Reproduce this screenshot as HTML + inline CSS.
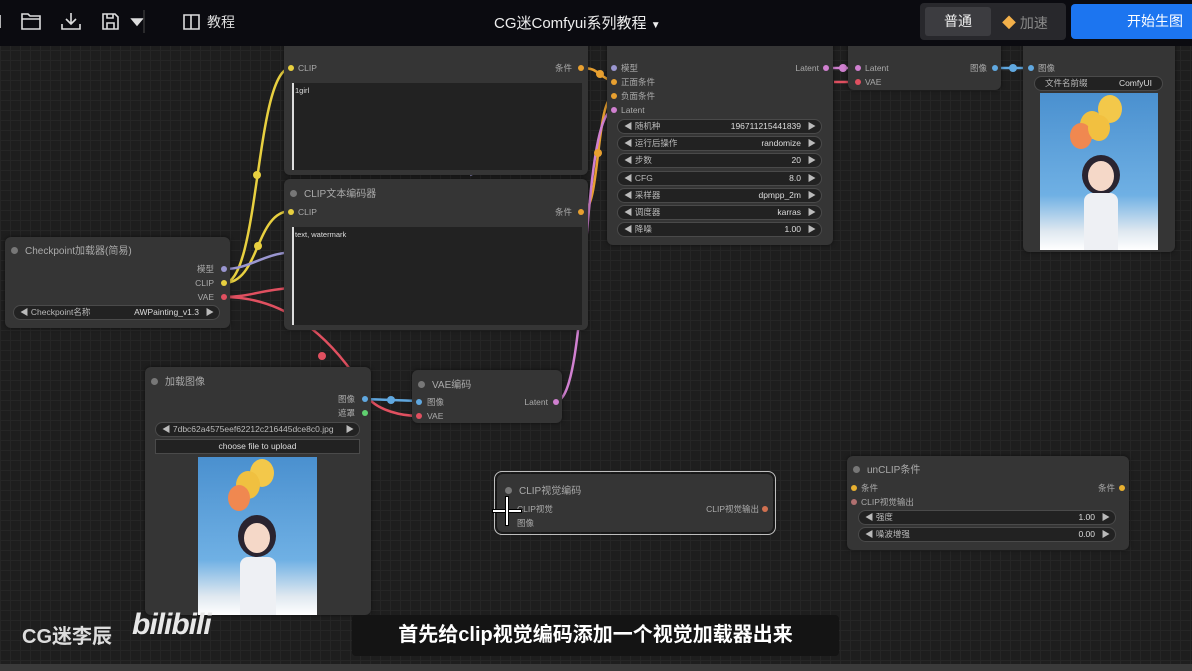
<!DOCTYPE html>
<html><head><meta charset="utf-8"><style>
*{margin:0;padding:0;box-sizing:border-box}
body{width:1192px;height:671px;overflow:hidden;background:#1e1e1e;font-family:"Liberation Sans","Noto Sans CJK SC",sans-serif;color:#bbb;position:relative;
background-image:linear-gradient(#262626 1px,transparent 1px),linear-gradient(90deg,#262626 1px,transparent 1px),linear-gradient(#181818 1px,transparent 1px),linear-gradient(90deg,#181818 1px,transparent 1px);
background-size:10px 10px,10px 10px,100px 100px,100px 100px}
.a{position:absolute}
.node{position:absolute;background:#353535;border-radius:6px;box-shadow:0 0 4px #0008}
.tt{position:absolute;font-size:10px;color:#aaa;white-space:nowrap}
.tt::before{content:"";display:inline-block;width:7px;height:7px;border-radius:50%;background:#777;margin-right:7px;vertical-align:-0px}
.lb{position:absolute;font-size:8.5px;color:#aaa;white-space:nowrap;line-height:10px}
.dot{position:absolute;width:6px;height:6px;border-radius:50%}
.w{position:absolute;height:15px;border-radius:8px;background:#222;border:1px solid #4a4a4a;font-size:8.5px;color:#bbb;line-height:13px}
.w .l{position:absolute;left:6px}.w .r{position:absolute;right:20px;color:#ddd}.w .ar{position:absolute;right:5px}
.ta{position:absolute;background:#222;border-left:2px solid #ddd;font-size:7.5px;color:#ddd;padding:3px 1px}
.img{position:absolute;background:linear-gradient(#4a90cf,#6fb0e4 65%,#dfe8f0 88%,#fff);overflow:hidden}
.bal{position:absolute;border-radius:50%}
</style></head><body>
<svg class="a" style="left:0;top:0" width="1192" height="671">
<g fill="none" stroke-width="2.5">
<path d="M224 283 C260 283,255 68,291 68" stroke="#e8d040"/>
<path d="M224 283 C260 283,255 211,291 211" stroke="#e8d040"/>
<path d="M224 269 C250 269,260 255,291 252" stroke="#9a96d0"/>
<path d="M224 297 C250 297,260 290,291 288" stroke="#e05060"/>
<path d="M224 297 C280 297,330 330,370 400 C380 410,400 416,419 416" stroke="#e05060"/>
<path d="M581 68 C600 68,595 75,614 82" stroke="#e8a030"/>
<path d="M583 211 C600 211,596 96,614 96" stroke="#e8a030"/>
<path d="M556 401 C590 401,580 110,614 110" stroke="#d080d0"/>
<path d="M826 68 L858 68" stroke="#d080d0"/>
<path d="M834 82 L858 82" stroke="#e05060"/>
<path d="M996 68 L1030 68" stroke="#60a8e0"/>
<path d="M364 399 L419 401" stroke="#60a8e0"/>
<path d="M470 175 L480 170" stroke="#9a96d0"/>
</g>
<circle cx="257" cy="175" r="4" fill="#e8d040"/><circle cx="258" cy="246" r="4" fill="#e8d040"/>
<circle cx="322" cy="356" r="4" fill="#e05060"/><circle cx="598" cy="153" r="4" fill="#e8a030"/>
<circle cx="843" cy="68" r="4" fill="#d080d0"/><circle cx="1013" cy="68" r="4" fill="#60a8e0"/>
<circle cx="391" cy="400" r="4" fill="#60a8e0"/><circle cx="600" cy="74" r="4" fill="#e8a030"/>
</svg>

<div class="node" style="left:284px;top:38px;width:304px;height:137px">
<div class="lb" style="left:14px;top:25px">CLIP</div><div class="dot" style="left:4px;top:27px;background:#e8d040"></div>
<div class="lb" style="right:16px;top:25px">条件</div><div class="dot" style="right:4px;top:27px;background:#e8a030"></div>
<div class="ta" style="left:8px;top:45px;width:290px;height:87px">1girl</div></div>
<div class="node" style="left:284px;top:179px;width:304px;height:151px">
<div class="tt" style="left:6px;top:6px">CLIP文本编码器</div>
<div class="lb" style="left:14px;top:28px">CLIP</div><div class="dot" style="left:4px;top:30px;background:#e8d040"></div>
<div class="lb" style="right:16px;top:28px">条件</div><div class="dot" style="right:4px;top:30px;background:#e8a030"></div>
<div class="ta" style="left:8px;top:48px;width:290px;height:98px">text, watermark</div></div>
<div class="node" style="left:5px;top:237px;width:225px;height:91px">
<div class="tt" style="left:6px;top:5px">Checkpoint加载器(简易)</div>
<div class="lb" style="right:16px;top:27px">模型</div><div class="dot" style="right:3px;top:29px;background:#9a96d0"></div>
<div class="lb" style="right:16px;top:41px">CLIP</div><div class="dot" style="right:3px;top:43px;background:#e8d040"></div>
<div class="lb" style="right:16px;top:55px">VAE</div><div class="dot" style="right:3px;top:57px;background:#e05060"></div>
<div class="w" style="left:8px;top:68px;width:207px"><span class="l">◀ Checkpoint名称</span><span class="r">AWPainting_v1.3</span><span class="ar">▶</span></div></div>
<div class="node" style="left:607px;top:38px;width:226px;height:207px">
<div class="lb" style="left:14px;top:25px">模型</div><div class="dot" style="left:4px;top:27px;background:#9a96d0"></div>
<div class="lb" style="left:14px;top:39px">正面条件</div><div class="dot" style="left:4px;top:41px;background:#e8a030"></div>
<div class="lb" style="left:14px;top:53px">负面条件</div><div class="dot" style="left:4px;top:55px;background:#e8a030"></div>
<div class="lb" style="left:14px;top:67px">Latent</div><div class="dot" style="left:4px;top:69px;background:#d080d0"></div>
<div class="lb" style="right:14px;top:25px">Latent</div><div class="dot" style="right:4px;top:27px;background:#d080d0"></div>
<div class="w" style="left:10px;top:81px;width:205px"><span class="l">◀ 随机种</span><span class="r">196711215441839</span><span class="ar">▶</span></div>
<div class="w" style="left:10px;top:98px;width:205px"><span class="l">◀ 运行后操作</span><span class="r">randomize</span><span class="ar">▶</span></div>
<div class="w" style="left:10px;top:115px;width:205px"><span class="l">◀ 步数</span><span class="r">20</span><span class="ar">▶</span></div>
<div class="w" style="left:10px;top:133px;width:205px"><span class="l">◀ CFG</span><span class="r">8.0</span><span class="ar">▶</span></div>
<div class="w" style="left:10px;top:150px;width:205px"><span class="l">◀ 采样器</span><span class="r">dpmpp_2m</span><span class="ar">▶</span></div>
<div class="w" style="left:10px;top:167px;width:205px"><span class="l">◀ 调度器</span><span class="r">karras</span><span class="ar">▶</span></div>
<div class="w" style="left:10px;top:184px;width:205px"><span class="l">◀ 降噪</span><span class="r">1.00</span><span class="ar">▶</span></div></div>
<div class="node" style="left:848px;top:38px;width:153px;height:52px">
<div class="lb" style="left:17px;top:25px">Latent</div><div class="dot" style="left:7px;top:27px;background:#d080d0"></div>
<div class="lb" style="left:17px;top:39px">VAE</div><div class="dot" style="left:7px;top:41px;background:#e05060"></div>
<div class="lb" style="right:14px;top:25px">图像</div><div class="dot" style="right:3px;top:27px;background:#60a8e0"></div></div>
<div class="node" style="left:1023px;top:38px;width:152px;height:214px">
<div class="lb" style="left:15px;top:25px">图像</div><div class="dot" style="left:5px;top:27px;background:#60a8e0"></div>
<div class="w" style="left:11px;top:38px;width:129px"><span class="l" style="left:10px">文件名前缀</span><span class="r" style="right:10px">ComfyUI</span></div>
<div class="img" style="left:17px;top:55px;width:118px;height:157px">
<div class="bal" style="left:40px;top:18px;width:24px;height:28px;background:#f0c040"></div>
<div class="bal" style="left:58px;top:2px;width:24px;height:28px;background:#f3c84a"></div>
<div class="bal" style="left:30px;top:30px;width:22px;height:26px;background:#f08850"></div>
<div class="bal" style="left:48px;top:22px;width:22px;height:26px;background:#f2c040"></div>
<div class="bal" style="left:42px;top:62px;width:38px;height:40px;background:#2a2430"></div>
<div class="bal" style="left:48px;top:68px;width:26px;height:30px;background:#f5d8c8"></div>
<div class="a" style="left:44px;top:100px;width:34px;height:57px;background:#eef0f4;border-radius:8px 8px 0 0"></div></div></div>
<div class="node" style="left:145px;top:367px;width:226px;height:248px">
<div class="tt" style="left:6px;top:6px">加载图像</div>
<div class="lb" style="right:16px;top:27px">图像</div><div class="dot" style="right:3px;top:29px;background:#60a8e0"></div>
<div class="lb" style="right:16px;top:41px">遮罩</div><div class="dot" style="right:3px;top:43px;background:#60d070"></div>
<div class="w" style="left:10px;top:55px;width:205px"><span class="l">◀ 7dbc62a4575eef62212c216445dce8c0.jpg</span><span class="ar">▶</span></div>
<div class="a" style="left:10px;top:72px;width:205px;height:15px;background:#222;border:1px solid #4a4a4a;font-size:8.5px;color:#ddd;text-align:center;line-height:13px">choose file to upload</div>
<div class="img" style="left:53px;top:90px;width:119px;height:158px">
<div class="bal" style="left:52px;top:2px;width:24px;height:28px;background:#f3c84a"></div>
<div class="bal" style="left:38px;top:14px;width:24px;height:28px;background:#f0c040"></div>
<div class="bal" style="left:30px;top:28px;width:22px;height:26px;background:#f08850"></div>
<div class="bal" style="left:40px;top:58px;width:38px;height:42px;background:#2a2430"></div>
<div class="bal" style="left:46px;top:66px;width:26px;height:30px;background:#f5d8c8"></div>
<div class="a" style="left:42px;top:100px;width:36px;height:58px;background:#eef0f4;border-radius:8px 8px 0 0"></div></div></div>
<div class="node" style="left:412px;top:370px;width:150px;height:53px">
<div class="tt" style="left:6px;top:6px">VAE编码</div>
<div class="lb" style="left:15px;top:27px">图像</div><div class="dot" style="left:4px;top:29px;background:#60a8e0"></div>
<div class="lb" style="left:15px;top:41px">VAE</div><div class="dot" style="left:4px;top:43px;background:#e05060"></div>
<div class="lb" style="right:14px;top:27px">Latent</div><div class="dot" style="right:3px;top:29px;background:#d080d0"></div></div>
<div class="a" style="left:494px;top:471px;width:282px;height:64px;border:1.5px solid #ccc;border-radius:8px"></div>
<div class="node" style="left:497px;top:474px;width:276px;height:58px">
<div class="tt" style="left:8px;top:8px">CLIP视觉编码</div>
<div class="lb" style="left:20px;top:30px">CLIP视觉</div>
<div class="lb" style="left:20px;top:44px">图像</div>
<div class="lb" style="right:14px;top:30px">CLIP视觉输出</div><div class="dot" style="right:5px;top:32px;background:#d07050"></div></div>
<div class="a" style="left:492px;top:509px;width:30px;height:4px;background:#fff;border:1px solid #000"></div>
<div class="a" style="left:505px;top:496px;width:4px;height:30px;background:#fff;border:1px solid #000"></div>
<div class="node" style="left:847px;top:456px;width:282px;height:94px">
<div class="tt" style="left:6px;top:5px">unCLIP条件</div>
<div class="lb" style="left:14px;top:27px">条件</div><div class="dot" style="left:4px;top:29px;background:#e8b030"></div>
<div class="lb" style="left:14px;top:41px">CLIP视觉输出</div><div class="dot" style="left:4px;top:43px;background:#b07070"></div>
<div class="lb" style="right:14px;top:27px">条件</div><div class="dot" style="right:4px;top:29px;background:#e8b030"></div>
<div class="w" style="left:11px;top:54px;width:258px"><span class="l">◀ 强度</span><span class="r">1.00</span><span class="ar">▶</span></div>
<div class="w" style="left:11px;top:71px;width:258px"><span class="l">◀ 噪波增强</span><span class="r">0.00</span><span class="ar">▶</span></div></div>

<div class="a" style="left:0;top:0;width:1192px;height:46px;background:#0b0b10"></div>
<svg class="a" style="left:0;top:0" width="250" height="46" fill="none" stroke="#ddd" stroke-width="1.6">
<path d="M0 15 V28"/>
<path d="M22 14 h6 l2 2 h10 v13 h-18z M22 19 h18"/>
<path d="M71 13 v11 M66 19 l5 5 5-5 M62 24 v5 h18 v-5"/>
<path d="M103 14 h12 l3 3 v12 h-15z M107 14 v4 h6 v-4 M107 29 v-6 h7 v6"/>
<path d="M132 19 h10 l-5 6z" fill="#ddd"/>
<path d="M144 10 v23" stroke="#333"/>
<path d="M184 15 h7 v14 h-7z M191 15 h8 v14 h-8"/>
</svg>
<div class="a" style="left:207px;top:12px;font-size:14px;color:#ddd">教程</div>
<div class="a" style="left:494px;top:12px;font-size:15px;color:#eee">CG迷Comfyui系列教程 <span style="font-size:10px">▼</span></div>
<div class="a" style="left:920px;top:3px;width:146px;height:37px;background:#28282c;border-radius:4px"></div>
<div class="a" style="left:925px;top:7px;width:66px;height:29px;background:#3c3c40;border-radius:3px;color:#eee;font-size:14px;text-align:center;line-height:29px">普通</div>
<div class="a" style="left:1002px;top:13px;font-size:14px;color:#888"><span style="color:#f3b04a">◆</span> 加速</div>
<div class="a" style="left:1071px;top:4px;width:125px;height:35px;background:#1c75f0;border-radius:4px;color:#fff;font-size:14px;line-height:35px;padding-left:56px">开始生图</div>

<div class="a" style="left:22px;top:620px;font-size:20px;color:#ddd;font-weight:bold">CG迷李辰</div>
<div class="a" style="left:132px;top:608px;font-size:30px;color:#e8e8e8;font-weight:bold;font-style:italic;letter-spacing:-1px">bilibili</div>
<div class="a" style="left:352px;top:615px;width:487px;height:41px;background:#141414;border-radius:4px;color:#fff;font-size:20px;font-weight:bold;line-height:41px;text-align:center">首先给clip视觉编码添加一个视觉加载器出来</div>
<div class="a" style="left:0;top:664px;width:1192px;height:7px;background:#3a3a3a"></div>
</body></html>
